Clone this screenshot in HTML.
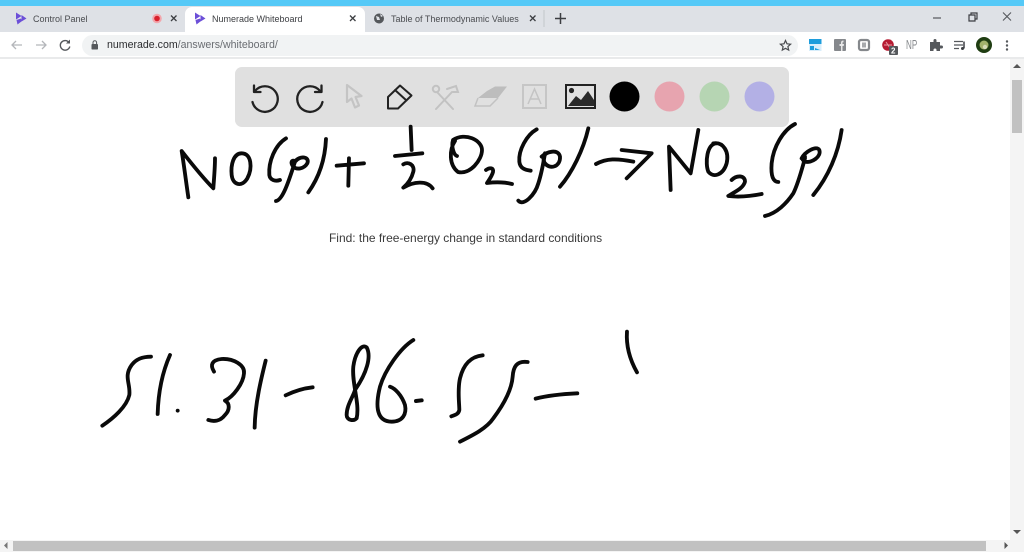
<!DOCTYPE html>
<html><head><meta charset="utf-8"><style>
html,body{margin:0;padding:0;background:#fff}
body{width:1024px;height:552px;position:relative;overflow:hidden;font-family:"Liberation Sans",sans-serif}
.a{position:absolute}
.t{position:absolute;white-space:nowrap;line-height:12px;font-size:9px;color:#4a4c50;filter:blur(.25px)}
svg{position:absolute;left:0;top:0}
</style></head><body>
<div class="a" style="left:0;top:0;width:1024px;height:6px;background:#55c9f7"></div>
<div class="a" style="left:0;top:6px;width:1024px;height:26px;background:#dee1e6"></div>
<div class="a" style="left:185px;top:7px;width:180px;height:26px;background:#fff;border-radius:7px 7px 0 0"></div>
<div class="a" style="left:0;top:32px;width:1024px;height:25px;background:#fff"></div>
<div class="a" style="left:82px;top:35px;width:716px;height:21px;background:#f1f3f4;border-radius:11px"></div>
<div class="a" style="left:0;top:57px;width:1024px;height:2px;background:#e9eaeb"></div>
<div class="t" style="left:33px;top:13px;width:90px">Control Panel</div>
<div class="t" style="left:212px;top:13px;color:#3c3e42">Numerade Whiteboard</div>
<div class="t" style="left:391px;top:13px">Table of Thermodynamic Values</div>
<div class="t" style="left:107px;top:39px;font-size:10.6px;color:#2b2c2f">numerade.com<span style="color:#6a6d72">/answers/whiteboard/</span></div>
<div class="t" style="left:906px;top:39px;font-size:13px;color:#85888c;transform:scaleX(.62);transform-origin:left">NP</div>
<div class="t" style="left:329px;top:232px;font-size:12px;color:#3a3a3a;letter-spacing:-.02px">Find: the free-energy change in standard conditions</div>

<!-- page toolbar -->
<div class="a" style="left:235px;top:67px;width:554px;height:60px;background:#e0e0e0;border-radius:7px"></div>

<svg width="1024" height="552" viewBox="0 0 1024 552" fill="none">
<!-- tab icons -->
<g fill="#6c4fd8">
<path d="M16 12.500l5.500 3.500-5.500 3.500zM16.500 20l4.500-1.500 1 2.500-4.500 3.500zM21.500 15l5 3.500-5 3z"/>
<path d="M195 12.500l5.500 3.500-5.500 3.500zM195.500 20l4.500-1.500 1 2.500-4.500 3.500zM200.500 15l5 3.500-5 3z"/>
</g>
<circle cx="157" cy="18.500" r="4.800" fill="#f2a6ac"/><circle cx="157" cy="18.500" r="2.800" fill="#d8202c"/>
<g stroke="#3c3e42" stroke-width="1.300">
<path d="M171 15.500l5.500 5.500M176.500 15.500l-5.500 5.500"/>
<path d="M350 15.500l5.500 5.500M355.500 15.500l-5.500 5.500"/>
<path d="M530 15.500l5.500 5.500M535.500 15.500l-5.500 5.500"/>
</g>
<circle cx="379" cy="18.500" r="5" fill="#55585c"/><path d="M376 16l3 1 1 3-3 0zM380 14l3 2-2 1z" fill="#dee1e6"/>
<path d="M544 10v17" stroke="#c3c6ca" stroke-width="1"/>
<path d="M560.500 13v11M555 18.500h11" stroke="#3c3e42" stroke-width="1.500"/>
<path d="M933 18h8" stroke="#55585c" stroke-width="1.200"/>
<path d="M969 15h6v6h-6zM971 15v-2h6v6h-2" stroke="#3c3e42" stroke-width="1.200"/>
<!-- close window -->
<path d="M1003 12.500l8 8M1011 12.500l-8 8" stroke="#55585c" stroke-width="1.100"/>
<!-- nav -->
<path d="M22 45H12M16 41l-4 4 4 4" stroke="#b4b6ba" stroke-width="1.300"/>
<path d="M36 45h10M42 41l4 4-4 4" stroke="#b4b6ba" stroke-width="1.300"/>
<path d="M69 42.500a4.800 4.800 0 1 0 .8 4" stroke="#55585c" stroke-width="1.400"/><path d="M70 39.500v4h-4z" fill="#55585c"/>
<rect x="91.500" y="44" width="6.500" height="5.500" rx=".8" fill="#55585c"/><path d="M93 44v-1.500a1.800 1.800 0 0 1 3.600 0V44" stroke="#55585c" stroke-width="1"/>
<!-- star -->
<path d="M785.500 40.500l1.500 3.300 3.600.4-2.700 2.400.8 3.500-3.200-1.800-3.200 1.800.8-3.500-2.700-2.400 3.600-.4z" stroke="#4a4c50" stroke-width="1.200"/>
<!-- extensions -->
<rect x="809" y="39" width="12.500" height="12" fill="#d8eefb"/><rect x="809" y="39" width="12.500" height="5" fill="#1d9ddc"/><path d="M810 50h4v-4h-4zM815 48l5 2h-5z" fill="#1d9ddc"/>
<rect x="834" y="39" width="12" height="12" rx="1" fill="#85888c"/><path d="M841 51v-5h-1.500v-2h1.500v-1.500c0-1.300 1-2 2.500-2v1.800c-.7 0-1 .2-1 .8V44h1.500l-.3 2h-1.200v5z" fill="#e8e8e8"/>
<rect x="859" y="40" width="10" height="10" rx="2" stroke="#85888c" stroke-width="2.200"/><rect x="862" y="42.500" width="4" height="5" fill="#a8aaad"/>
<circle cx="888" cy="45" r="5.800" fill="#b51c33"/><path d="M884 45h8M886 42l4 6" stroke="#e89aa5" stroke-width="1"/>
<rect x="889" y="46" width="9" height="9" rx="1" fill="#55585c"/>
<text x="891" y="53.500" font-family="Liberation Sans" font-size="8" font-weight="bold" fill="#fff">2</text>
<path d="M930 42h3.500v-1.500a1.500 1.500 0 0 1 3 0V42h3.500v3.500h1.500a1.500 1.500 0 0 1 0 3H940V51h-3.500v-1a1.500 1.500 0 0 0-3 0v1H930z" fill="#55585c"/>
<path d="M954 41.500h9M954 45h9M954 48.500h5" stroke="#55585c" stroke-width="1.200"/><path d="M964 41.500v7" stroke="#3c3e42" stroke-width="1.500"/><circle cx="962.500" cy="48.500" r="1.500" fill="#3c3e42"/>
<circle cx="984" cy="45" r="8" fill="#1f3d12"/><circle cx="984" cy="45" r="4.500" fill="#a3b36c"/><circle cx="985" cy="47" r="2.200" fill="#d7dcb8"/>
<g fill="#55585c"><circle cx="1007" cy="41.500" r="1.200"/><circle cx="1007" cy="45.500" r="1.200"/><circle cx="1007" cy="49.500" r="1.200"/></g>

<!-- whiteboard tool icons -->
<g stroke="#222" stroke-width="2.300" stroke-linecap="round" stroke-linejoin="round">
<path d="M255 91A12.800 12.800 0 1 1 252.500 102"/><path d="M254 85.500V92h6.500"/>
<path d="M320 91A12.800 12.800 0 1 0 322.500 102"/><path d="M321.500 85.500V92H315"/>
<path d="M388 97L400 85.500L411.500 95.500L398 108.500H388ZM395 90L406.500 100.500" stroke-width="2"/>
</g>
<path d="M347 85l0 17 4.500-3.500 3.500 9 4-2-3.500-8.500 6-1z" stroke="#c4c4c4" stroke-width="2.200" stroke-linejoin="round"/>
<g stroke="#c2c2c2" stroke-width="2" stroke-linecap="round">
<path d="M437 92l16 17M452 92l-16 17"/><circle cx="436" cy="89" r="3.200"/><path d="M447 89l9-3 2 6-5 0"/>
</g>
<path d="M487 91L495 86.500H507L498 98H478z" fill="#bdbdbd"/><path d="M478 98L475 106H490L498 98" stroke="#c2c2c2" stroke-width="1.500"/>
<rect x="523" y="85" width="23" height="23" stroke="#c6c6c6" stroke-width="2"/>
<path d="M528 104l6.500-15 6.500 15M530.500 99h8" stroke="#c4c4c4" stroke-width="1.500"/>
<rect x="566" y="85" width="29" height="23" stroke="#222" stroke-width="2"/>
<circle cx="571.500" cy="90.500" r="2.600" fill="#222"/><path d="M568 106l8-10 5 4 7-9 6 9v6z" fill="#2a2a2a"/>
<circle cx="624.500" cy="96.500" r="15" fill="#000"/>
<circle cx="669.500" cy="96.500" r="15" fill="#e7a4af"/>
<circle cx="714.500" cy="96.500" r="15" fill="#b6d5b3"/>
<circle cx="759.500" cy="96.500" r="15" fill="#b3b0e5"/>

<!-- handwriting: first line -->
<g stroke="#0a0a0a" stroke-linecap="round" stroke-linejoin="round" style="filter:blur(.2px)">
<g transform="translate(170 125) scale(.3333)" stroke-width="11.500">
<path d="M55 217C48 170 42 120 35 78C60 110 100 160 130 190C132 160 135 130 135 100"/>
<path d="M215 85C190 85 182 120 185 150C188 180 215 188 232 160C248 130 245 85 215 85"/>
<path d="M348 40C315 60 295 110 298 150C300 165 315 170 330 165"/>
<path d="M318 228C335 225 350 190 375 110C390 90 420 95 412 115C402 132 380 135 370 125C360 112 365 105 375 108"/>
<path d="M468 42C465 110 445 160 415 202"/>
<path d="M500 122L582 115M537 100L535 182"/>
<path d="M722 5L725 75M675 93L757 85"/>
<path d="M700 118C715 108 735 120 730 140C725 160 715 175 700 188C730 170 770 165 788 190"/>
</g>
<g stroke-width="3.800">
<path d="M455 141C449 150 449 165 458 172C470 175 482 160 482 150C482 140 465 132 453 140C451 147 454 155 457 156"/>
<path d="M486 170C490 167 494 168 493 172C492 176 489 180 487 183C495 182 504 182 512 184"/>
</g>
<g transform="translate(500 120) scale(.3333)" stroke-width="11.500">
<path d="M110 28C80 45 55 90 58 125C60 145 75 150 92 152"/>
<path d="M55 242C70 260 105 225 115 190C125 160 130 130 135 100"/>
<path d="M125 110C140 95 175 85 180 110C182 140 150 150 135 130C128 120 130 105 140 100"/>
<path d="M265 25C250 90 215 160 180 200"/>
<path d="M288 132C320 115 350 115 400 125"/>
<path d="M365 90L455 100L380 175"/>
<path d="M512 210L507 80L572 160L595 30"/>
<path d="M650 70C620 70 615 130 625 155C640 175 670 165 680 130C688 95 670 65 640 70"/>
<path d="M695 180C710 165 735 165 735 185C730 205 705 215 685 228C720 232 755 228 785 222"/>
<path d="M885 12C850 30 820 80 815 130C812 170 820 185 835 186"/>
<path d="M795 288C830 280 860 250 880 220C895 190 905 150 915 115"/>
<path d="M905 115C915 95 950 75 958 90C965 110 935 130 915 125C905 120 905 110 915 110"/>
<path d="M1025 30C1015 100 985 170 940 225"/>
</g>
<!-- second line -->
<g transform="translate(90 340) scale(.3333)" stroke-width="11.500">
<path d="M37 257C70 235 110 200 118 165C122 130 100 110 125 75C140 55 160 50 183 50"/>
<path d="M240 45C220 90 205 150 203 222"/>
<path d="M263 212h.1"/>
<path d="M372 95C360 75 365 60 395 57C430 55 465 75 462 100C460 130 430 170 405 182C420 190 420 210 405 225C390 245 370 245 355 240"/>
<path d="M527 62C515 110 495 190 494 263"/>
<path d="M587 166C610 155 640 145 668 142"/>
<path d="M795 150C830 100 845 50 830 22C815 10 795 40 790 80C785 130 810 190 800 235C790 245 770 240 770 225C770 195 790 170 795 150"/>
</g>
<g transform="translate(380 320) scale(.3333)" stroke-width="11.500">
<path d="M100 60C60 85 15 150 0 200C-15 260 -10 305 35 305C70 305 80 280 75 255C65 225 45 205 30 200"/>
<path d="M108 243L125 241" stroke-width="12"/>
<path d="M308 106C270 110 250 135 240 175C232 210 238 250 238 270C235 285 222 285 214 289"/>
<path d="M443 126C410 122 400 140 398 170C395 210 370 255 340 295C320 325 280 345 240 365"/>
<path d="M467 236C510 225 550 222 592 220"/>
<path d="M741 35C738 80 750 120 771 157"/>
</g>
</g>

<!-- scrollbars -->
<rect x="1010" y="59" width="14" height="481" fill="#f4f4f4"/>
<rect x="1012" y="80" width="10" height="53" fill="#c1c1c1"/>
<path d="M1017 64l-4 4h8z" fill="#555"/>
<path d="M1017 534l-4-4h8z" fill="#555"/>
<rect x="0" y="540" width="1024" height="12" fill="#f4f4f4"/>
<rect x="13" y="541" width="973" height="10" fill="#c1c1c1"/>
<path d="M4 545.500l3.500-3.500v7z" fill="#777"/>
<path d="M1008 545.500l-3.500-3.500v7z" fill="#555"/>
</svg>
</body></html>
